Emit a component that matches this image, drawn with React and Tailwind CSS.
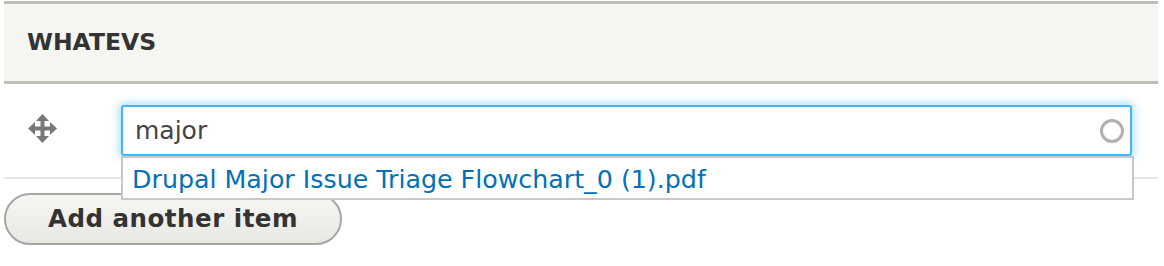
import React from "react";

function MoveIcon() {
  return (
    <svg width="29" height="29" viewBox="0 0 29 29" className="text-[#787878]">
      <g fill="currentColor">
        <rect x="12.5" y="5" width="4" height="19" />
        <rect x="5" y="12.5" width="19" height="4" />
        <polygon points="14.5,0 21,7 8,7" />
        <polygon points="14.5,29 21,22 8,22" />
        <polygon points="0,14.5 7,8 7,21" />
        <polygon points="29,14.5 22,8 22,21" />
      </g>
    </svg>
  );
}

export default function App() {
  return (
    <div
      className="w-[1164px] h-[266px] bg-white overflow-hidden pt-[1px] pl-[4px] pr-[6px]"
      style={{ fontFamily: '"DejaVu Sans", "Lucida Grande", sans-serif' }}
    >
      {/* Table header */}
      <div className="h-[83px] bg-[#f5f5f2] border-t-[3px] border-b-[3px] border-[#bfbfba] flex items-center pl-[23px]">
        <span className="text-[23.5px] font-bold text-[#333]">WHATEVS</span>
      </div>

      {/* Row */}
      <div className="relative h-[95px] border-b-2 border-[#e4e4e0]">
        <div className="absolute left-[24px] top-[30px]">
          <MoveIcon />
        </div>
        <div className="absolute left-[117px] top-[21px] w-[1011px]">
          <div className="h-[51px] rounded-[3px] border-2 border-[#40b6ff] shadow-[0_0_8px_2px_rgba(64,182,255,0.45)] bg-white flex items-center px-[12px]">
            <span className="text-[25px] text-[#444] flex-1">major</span>
            <span className="w-[24px] h-[24px] rounded-full border-[3px] border-[#b0b0b0] mr-[-6px]"></span>
          </div>
          <div className="w-[1013px] h-[44px] bg-white border-2 border-[#c8c8c8] flex items-center px-[9px] pt-[3px]">
            <span className="text-[25.3px] text-[#0071b8]">Drupal Major Issue Triage Flowchart_0 (1).pdf</span>
          </div>
        </div>
      </div>

      {/* Button */}
      <div className="mt-[14px]">
        <button className="w-[338px] h-[52px] rounded-full border-2 border-[#a6a6a6] bg-gradient-to-b from-[#f6f6f3] to-[#e8e8e3] text-[24.5px] font-bold text-[#333] tracking-[0.5px]">
          Add another item
        </button>
      </div>
    </div>
  );
}
